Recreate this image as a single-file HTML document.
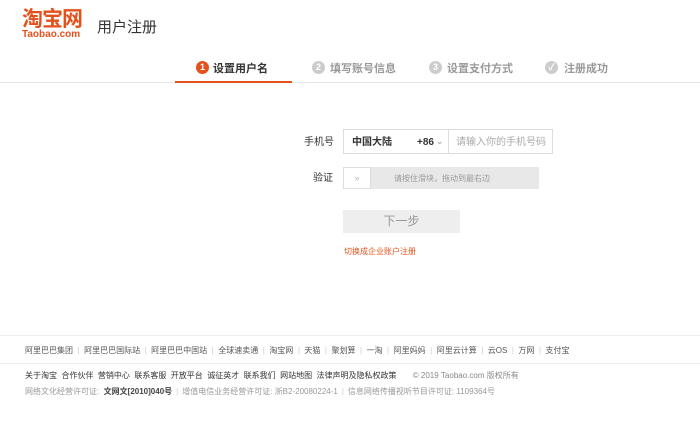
<!DOCTYPE html>
<html><head><meta charset="utf-8"><style>
*{margin:0;padding:0;box-sizing:border-box}
body{width:700px;height:434px;background:#fff;font-family:"Liberation Sans","Noto Sans CJK SC",sans-serif;position:relative;overflow:hidden;color:#333}
.a{position:absolute;white-space:nowrap}
.circ{position:absolute;width:13px;height:13px;border-radius:50%;background:#ccc;color:#fff;font-size:9px;text-align:center;line-height:13px;font-weight:bold}
.st{font-size:11px;color:#999;font-weight:bold}
.f{font-size:8px;color:#555}
.sep{color:#ccc;margin:0 4px}
.s1 .sep{margin:0 4.5px}
.l{line-height:12px}
</style></head><body>
<div class="a" style="left:22px;top:9px;font-size:21px;font-weight:bold;color:#e5511d;letter-spacing:-1px;line-height:22px">淘宝网</div>
<div class="a" style="left:22px;top:30px;font-size:10px;font-weight:bold;color:#e5511d;line-height:10px">Taobao.com</div>
<div class="a" style="left:97px;top:16px;font-size:15px;color:#333">用户注册</div>

<div class="a" style="left:0;top:82px;width:700px;height:1px;background:#e5e5e5"></div>
<div class="a" style="left:175px;top:81px;width:117px;height:2px;background:#e5511d"></div>
<div class="circ" style="left:196px;top:61px;background:#e5511d">1</div>
<div class="a st" style="left:213px;top:60px;color:#333">设置用户名</div>
<div class="circ" style="left:312px;top:61px">2</div>
<div class="a st" style="left:330px;top:60px">填写账号信息</div>
<div class="circ" style="left:429px;top:61px">3</div>
<div class="a st" style="left:447px;top:60px">设置支付方式</div>
<div class="circ" style="left:545px;top:61px">✓</div>
<div class="a st" style="left:564px;top:60px">注册成功</div>

<div class="a l" style="left:304px;top:137px;font-size:10px;color:#333">手机号</div>
<div class="a" style="left:343px;top:129px;width:210px;height:25px;border:1px solid #ddd"></div>
<div class="a" style="left:448px;top:129px;width:1px;height:25px;background:#ddd"></div>
<div class="a l" style="left:352px;top:137px;font-size:10px;font-weight:bold;color:#333">中国大陆</div>
<div class="a l" style="left:417px;top:137px;font-size:10px;font-weight:bold;color:#333">+86</div>
<div class="a l" style="left:436px;top:135px;font-size:9px;color:#999">⌄</div>
<div class="a l" style="left:456px;top:137px;font-size:10px;color:#aaa">请输入你的手机号码</div>

<div class="a l" style="left:313px;top:173px;font-size:10px;color:#333">验证</div>
<div class="a" style="left:343px;top:167px;width:196px;height:22px;background:#e8e8e8"></div>
<div class="a" style="left:343px;top:167px;width:28px;height:22px;background:#fff;border:1px solid #ddd;font-size:9px;color:#bbb;text-align:center;line-height:20px">»</div>
<div class="a l" style="left:394px;top:173px;font-size:8px;color:#999">请按住滑块，拖动到最右边</div>

<div class="a" style="left:343px;top:210px;width:117px;height:23px;background:#eee;font-size:12px;color:#999;text-align:center;line-height:23px">下一步</div>
<div class="a" style="left:344px;top:246px;font-size:8px;color:#e5511d">切换成企业账户注册</div>

<div class="a" style="left:0;top:335px;width:700px;height:1px;background:#eee"></div>
<div class="a f s1" style="left:25px;top:345px">阿里巴巴集团<span class="sep">|</span>阿里巴巴国际站<span class="sep">|</span>阿里巴巴中国站<span class="sep">|</span>全球速卖通<span class="sep">|</span>淘宝网<span class="sep">|</span>天猫<span class="sep">|</span>聚划算<span class="sep">|</span>一淘<span class="sep">|</span>阿里妈妈<span class="sep">|</span>阿里云计算<span class="sep">|</span>云OS<span class="sep">|</span>万网<span class="sep">|</span>支付宝</div>
<div class="a" style="left:0;top:363px;width:700px;height:1px;background:#eee"></div>
<div class="a f" style="left:25px;top:370px;color:#333">关于淘宝 &nbsp;合作伙伴 &nbsp;营销中心 &nbsp;联系客服 &nbsp;开放平台 &nbsp;诚征英才 &nbsp;联系我们 &nbsp;网站地图 &nbsp;法律声明及隐私权政策 <span style="color:#888;margin-left:14px">© 2019 Taobao.com 版权所有</span></div>
<div class="a f" style="left:25px;top:386px;color:#999">网络文化经营许可证: &nbsp;<b style="color:#444">文网文[2010]040号</b><span class="sep">|</span>增值电信业务经营许可证: 浙B2-20080224-1<span class="sep">|</span>信息网络传播视听节目许可证: 1109364号</div>
</body></html>
